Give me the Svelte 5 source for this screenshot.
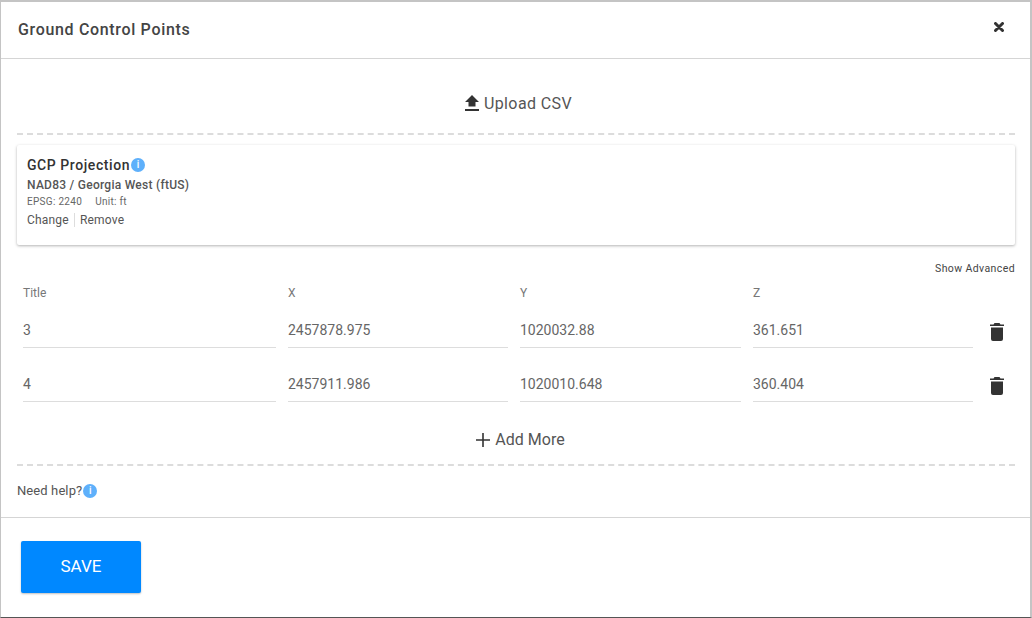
<script>
    const points = [
        { title: '3', x: '2457878.975', y: '1020032.88', z: '361.651' },
        { title: '4', x: '2457911.986', y: '1020010.648', z: '360.404' }
    ];
</script>

<div class="modal">
    <header class="modal-header">
        <h2>Ground Control Points</h2>
        <button class="close" aria-label="Close">
            <svg width="10" height="10" viewBox="0 0 10 10"><path d="M1.500 1.500 8.500 8.500M8.500 1.500 1.500 8.500" stroke="#333" stroke-width="3" stroke-linecap="round" fill="none" /></svg>
        </button>
    </header>

    <div class="modal-body">
        <button class="action upload">
            <svg width="16" height="16" viewBox="0 0 16 16"><path d="M4.500 11.500V7H1L8 0l7 7h-3.500v4.500zM1 14h14v2H1z" fill="#333" /></svg>
            Upload CSV
        </button>
        <div class="dashed"></div>

        <section class="card">
            <div class="card-title">GCP Projection<span class="info">i</span></div>
            <div class="proj-name">NAD83 / Georgia West (ftUS)</div>
            <div class="proj-meta"><span>EPSG: 2240</span><span>Unit: ft</span></div>
            <div class="proj-links"><span class="link">Change</span><span class="link">Remove</span></div>
        </section>

        <div class="advanced">Show Advanced</div>

        <div class="grid-row heads">
            <span>Title</span><span>X</span><span>Y</span><span>Z</span>
        </div>
        {#each points as p}
            <div class="grid-row point">
                <div class="field">{p.title}</div>
                <div class="field">{p.x}</div>
                <div class="field">{p.y}</div>
                <div class="field">{p.z}</div>
                <button class="trash" aria-label="Delete">
                    <svg width="14" height="18" viewBox="0 0 14 18"><path d="M1 4.500h12V16a2 2 0 0 1-2 2H3a2 2 0 0 1-2-2zM0 1.500h3.500l1-1.500h5l1 1.500H14v1.500H0z" fill="#333" /></svg>
                </button>
            </div>
        {/each}

        <button class="action add">
            <svg width="14" height="14" viewBox="0 0 14 14"><path d="M6.200 0h1.600v6.200H14v1.600H7.800V14H6.200V7.800H0V6.200h6.200z" fill="#333" /></svg>
            Add More
        </button>
        <div class="dashed"></div>

        <div class="help">Need help?<span class="info">i</span></div>
    </div>

    <footer class="modal-footer">
        <button class="save">SAVE</button>
    </footer>
</div>

<style>
    :global(body) {
        margin: 0;
        background: #fff;
        font-family: Roboto, "Liberation Sans", sans-serif;
    }

    .modal {
        box-sizing: border-box;
        width: 1032px;
        height: 618px;
        border: 1px solid #c4c4c4;
        border-top-width: 2px;
        border-right-width: 2px;
        border-bottom-color: #555;
        background: #fff;
        color: #555;
        overflow: hidden;
    }

    button {
        background: none;
        border: 0;
        padding: 0;
        font-family: inherit;
        cursor: pointer;
    }

    .modal-header {
        box-sizing: border-box;
        height: 57px;
        display: flex;
        align-items: center;
        justify-content: space-between;
        padding: 0 26px 2px 17px;
        border-bottom: 1px solid #d5d5d5;
    }

    .modal-header h2 {
        margin: 0;
        font-size: 16px;
        font-weight: 500;
        letter-spacing: 0.67px;
        color: #444;
    }

    .close {
        display: flex;
        margin-top: -4px;
    }

    .modal-body {
        box-sizing: border-box;
        height: 459px;
        padding: 0 15px 0 16px;
        border-bottom: 1px solid #d5d5d5;
    }

    .action {
        box-sizing: border-box;
        width: 100%;
        display: flex;
        align-items: center;
        justify-content: center;
        gap: 4px;
        font-size: 16px;
        letter-spacing: 0.4px;
        color: #555;
    }

    .upload {
        height: 74px;
        padding: 14px 0 0 4px;
    }

    .add {
        height: 62px;
        padding: 13px 0 0 9px;
        gap: 5px;
        letter-spacing: 0;
    }

    .dashed {
        height: 0;
        border-top: 2px dashed #dcdcdc;
    }

    .card {
        box-sizing: border-box;
        height: 100px;
        margin-top: 10px;
        padding: 12px 10px;
        border-radius: 2px;
        box-shadow: 0 1px 3px rgba(0, 0, 0, 0.3);
    }

    .card-title {
        display: flex;
        align-items: center;
        font-size: 14px;
        font-weight: 500;
        line-height: 16px;
        letter-spacing: 0.57px;
        color: #333;
    }

    .info {
        display: inline-block;
        width: 14px;
        height: 14px;
        margin-left: 1px;
        border-radius: 50%;
        background: #5eb0fb;
        color: #fff;
        font-size: 10px;
        font-weight: 500;
        line-height: 14px;
        letter-spacing: 0;
        text-align: center;
    }

    .proj-name {
        margin-top: 5px;
        font-size: 12px;
        font-weight: 500;
        line-height: 15px;
        letter-spacing: 0.26px;
    }

    .proj-meta {
        display: flex;
        gap: 13px;
        margin-top: 3px;
        font-size: 10px;
        line-height: 12px;
        letter-spacing: 0.3px;
        color: #666;
    }

    .proj-links {
        display: flex;
        margin-top: 5px;
        font-size: 12px;
        line-height: 14px;
        letter-spacing: 0.2px;
        color: #555;
    }

    .link + .link {
        margin-left: 5px;
        padding-left: 5px;
        border-left: 1px solid #ddd;
    }

    .advanced {
        margin-top: 18px;
        text-align: right;
        font-size: 10.500px;
        line-height: 12px;
        letter-spacing: 0.4px;
        color: #444;
    }

    .grid-row {
        display: grid;
        grid-template-columns: 253px 220px 221px 220px 40px;
        column-gap: 12px;
        padding-left: 6px;
    }

    .heads {
        margin-top: 11px;
        font-size: 12px;
        line-height: 14px;
        color: #777;
    }

    .point {
        height: 54px;
        align-items: end;
    }

    .heads + .point {
        height: 48px;
    }

    .field {
        box-sizing: border-box;
        height: 34px;
        padding-top: 7px;
        border-bottom: 1px solid #ddd;
        font-size: 14px;
        line-height: 18px;
        color: #666;
    }

    .trash {
        display: flex;
        align-self: end;
        height: 34px;
        padding: 9px 0 0 5px;
    }

    .help {
        display: flex;
        align-items: center;
        margin-top: 17px;
        font-size: 13px;
        line-height: 16px;
        letter-spacing: 0.1px;
    }

    .modal-footer {
        padding: 23px 20px;
    }

    .save {
        display: block;
        width: 120px;
        height: 52px;
        padding-bottom: 2px;
        border-radius: 2px;
        background: #0088ff;
        color: #fff;
        font-size: 17px;
        box-shadow: 0 1px 2px rgba(0, 0, 0, 0.25);
    }
</style>
